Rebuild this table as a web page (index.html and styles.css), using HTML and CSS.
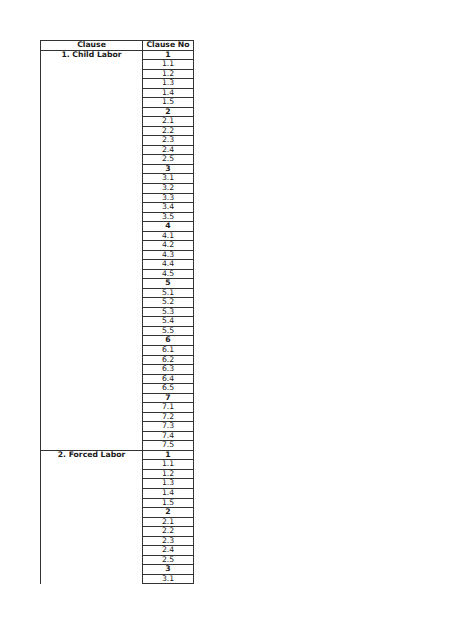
FILE: index.html
```html
<!DOCTYPE html>
<html>
<head>
<meta charset="utf-8">
<link rel="stylesheet" href="styles.css">
</head>
<body>
<div class="sheet">
  <div class="row head">
    <div class="c1">Clause</div>
    <div class="c2"><div class="cell">Clause No</div></div>
  </div>
  <div class="row">
    <div class="c1">1. Child Labor</div>
    <div class="c2">
      <div class="cell b">1</div><div class="cell">1.1</div><div class="cell">1.2</div><div class="cell">1.3</div><div class="cell">1.4</div><div class="cell">1.5</div>
      <div class="cell b">2</div><div class="cell">2.1</div><div class="cell">2.2</div><div class="cell">2.3</div><div class="cell">2.4</div><div class="cell">2.5</div>
      <div class="cell b">3</div><div class="cell">3.1</div><div class="cell">3.2</div><div class="cell">3.3</div><div class="cell">3.4</div><div class="cell">3.5</div>
      <div class="cell b">4</div><div class="cell">4.1</div><div class="cell">4.2</div><div class="cell">4.3</div><div class="cell">4.4</div><div class="cell">4.5</div>
      <div class="cell b">5</div><div class="cell">5.1</div><div class="cell">5.2</div><div class="cell">5.3</div><div class="cell">5.4</div><div class="cell">5.5</div>
      <div class="cell b">6</div><div class="cell">6.1</div><div class="cell">6.2</div><div class="cell">6.3</div><div class="cell">6.4</div><div class="cell">6.5</div>
      <div class="cell b">7</div><div class="cell">7.1</div><div class="cell">7.2</div><div class="cell">7.3</div><div class="cell">7.4</div><div class="cell">7.5</div>
    </div>
  </div>
  <div class="row">
    <div class="c1">2. Forced Labor</div>
    <div class="c2">
      <div class="cell b">1</div><div class="cell">1.1</div><div class="cell">1.2</div><div class="cell">1.3</div><div class="cell">1.4</div><div class="cell">1.5</div>
      <div class="cell b">2</div><div class="cell">2.1</div><div class="cell">2.2</div><div class="cell">2.3</div><div class="cell">2.4</div><div class="cell">2.5</div>
      <div class="cell b">3</div><div class="cell last">3.1</div>
    </div>
  </div>
</div>
</body>
</html>
```
FILE: styles.css
```css
html, body {
  margin: 0;
  padding: 0;
  background: #fff;
}
.sheet {
  margin: 40px 0 0 40px;
  width: 154px;
  font-family: "DejaVu Sans", sans-serif;
  font-size: 7.7px;
  color: #1a1a1a;
}
.row {
  display: flex;
}
.c1 {
  box-sizing: border-box;
  width: 102px;
  border-left: 1px solid #333;
  border-top: 1px solid #333;
  text-align: center;
  font-weight: bold;
  line-height: 8.54px;
}
.c2 {
  width: 52px;
  box-sizing: border-box;
  border-left: 1px solid #333;
  border-right: 1px solid #333;
}
.cell {
  box-sizing: border-box;
  height: 9.54px;
  line-height: 8.54px;
  border-top: 1px solid #333;
  text-align: center;
}
.head .cell, .head .c1 {
  font-weight: bold;
}
.cell.b {
  font-weight: bold;
}
.cell.last {
  border-bottom: 1px solid #333;
  height: 10.54px;
}
```
